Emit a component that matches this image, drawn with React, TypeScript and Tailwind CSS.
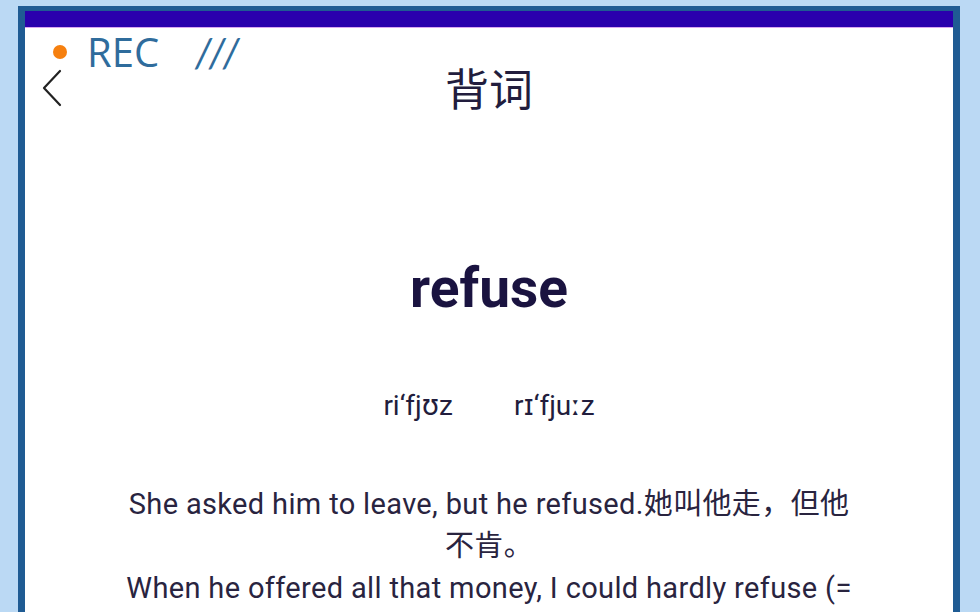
import React from 'react';

export default function App() {
  return (
    <div className="h-[612px] w-[980px] overflow-hidden bg-[#bbd9f4] pl-[18px] pr-[20px] pt-[6px]">
      <div className="flex h-[640px] flex-col border-x-[7px] border-t-[5px] border-[#1f5b93] bg-white">
        <div className="h-[17px] shrink-0 bg-[#2a00ad] border-b border-[#d9a6f0]" />
        <div className="relative flex shrink-0 flex-col items-center">
          <div className="absolute left-[28px] top-[4px] flex items-center">
            <span className="h-[14px] w-[14px] rounded-full bg-[#f6800f]" />
            <span className="ml-[20px] font-['Open_Sans','Lato',sans-serif] text-[40px] leading-none text-[#2f6c9c]">
              REC
            </span>
            <span className="ml-[36px] font-['Lato',sans-serif] text-[40px] leading-none italic tracking-[5px] text-[#2f6c9c]">
              ///
            </span>
          </div>
          <svg className="absolute left-[14px] top-[40px]" width="26" height="40" viewBox="0 0 26 40">
            <path d="M21 3 L5 20 L21 37" fill="none" stroke="#222" strokeWidth="2.2" strokeLinecap="round" strokeLinejoin="round" />
          </svg>
          <h1 className="mt-[31px] font-['Noto_Sans_CJK_SC',sans-serif] text-[44px] leading-[56px] text-[#221d3d]">
            背词
          </h1>
          <div className="mt-[142px] font-['Roboto',sans-serif] text-[55px] font-bold leading-[62px] text-[#1a1340]">
            refuse
          </div>
          <div className="mt-[71px] flex gap-[61px] font-['Roboto','DejaVu_Sans',sans-serif] text-[28px] leading-[32px] text-[#221d3d]">
            <span>ri‘fjʊz</span>
            <span>rɪ‘fjuːz</span>
          </div>
          <div className="mt-[61px] w-[744px] text-center font-['Roboto','Noto_Sans_CJK_SC',sans-serif] text-[29px] leading-[42px] tracking-[0.35px] text-[#29243f]">
            <p>She asked him to leave, but he refused.她叫他走，但他不肯。</p>
            <p>When he offered all that money, I could hardly refuse (= it was too good to refuse).</p>
          </div>
        </div>
      </div>
    </div>
  );
}
